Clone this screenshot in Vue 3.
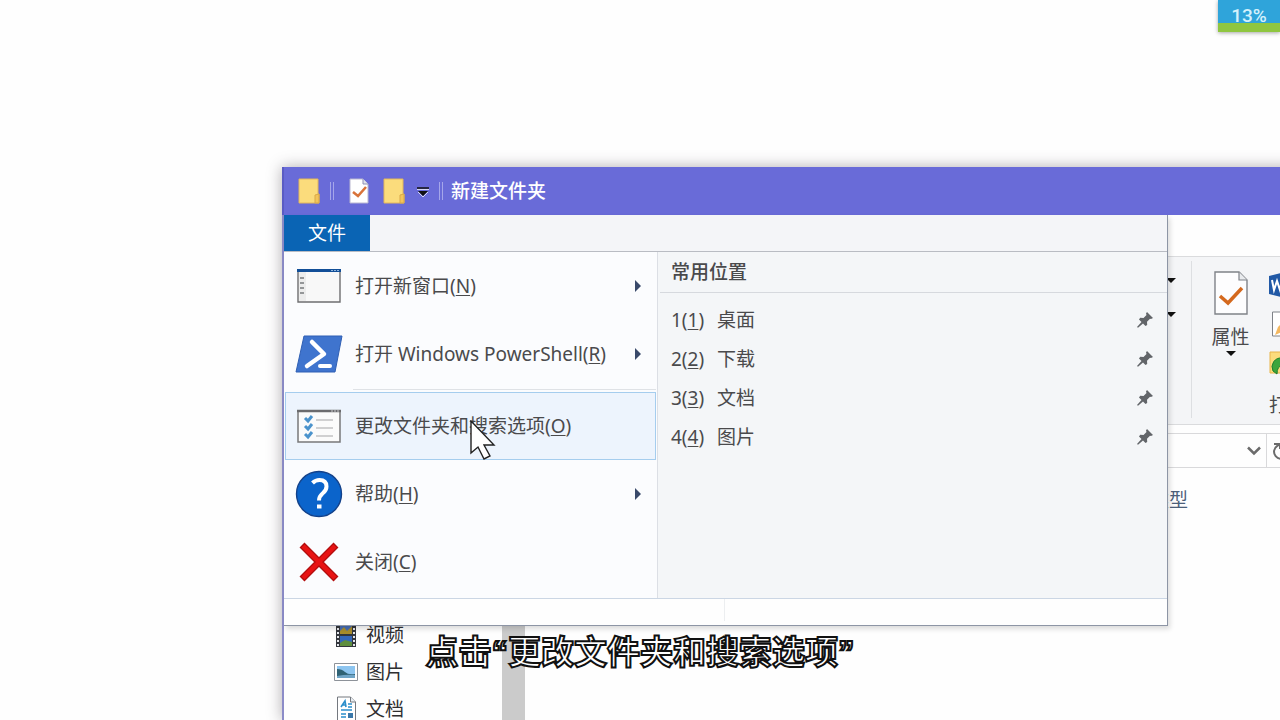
<script setup>
import { ref } from 'vue'

const menuItems = [
  { icon: 'window', label: '打开新窗口', key: 'N', more: true },
  { icon: 'shell', label: '打开 Windows PowerShell', key: 'R', more: true },
  { icon: 'options', label: '更改文件夹和搜索选项', key: 'O', split: true },
  { icon: 'help', label: '帮助', key: 'H', more: true },
  { icon: 'close', label: '关闭', key: 'C' },
]
const places = ['桌面', '下载', '文档', '图片']
const navItems = [
  { icon: 'video', label: '视频' },
  { icon: 'picture', label: '图片' },
  { icon: 'document', label: '文档' },
]

const active = ref('options')
const address = ref('')
const progress = ref(13)
</script>

<template>
  <div class="desktop">
    <div class="explorer">
      <header class="title-bar">
        <svg class="folder" viewBox="0 0 22 26">
          <path d="M1 1h19v15h1v9H1z" fill="#fbdc7c" stroke="#e3b75a" />
          <path d="M17 24v-7l4-1v9h-4z" fill="#f3c45a" stroke="#d9a948" />
        </svg>
        <span class="bar" />
        <svg class="check-doc" viewBox="0 0 20 26">
          <path d="M1 1h13l5 5v19H1z" fill="#fff" stroke="#b9b7d0" />
          <path d="M14 1v5h5" fill="#dfe3ee" stroke="#8f91b5" />
          <path d="M4 14l5 4 8-9" fill="none" stroke="#d9733a" stroke-width="2.600" />
        </svg>
        <svg class="folder second" viewBox="0 0 22 26">
          <path d="M1 1h19v15h1v9H1z" fill="#fbdc7c" stroke="#e3b75a" />
          <path d="M17 24v-7l4-1v9h-4z" fill="#f3c45a" stroke="#d9a948" />
        </svg>
        <svg class="drop" viewBox="0 0 12 12">
          <path d="M0 4.500h12M1 7l5 5 5-5" fill="none" stroke="#d5d6f5" />
          <path d="M0 3h12" stroke="#111" stroke-width="1.500" />
          <path d="M1 6h10l-5 5z" fill="#111" />
        </svg>
        <span class="bar" />
        <h1>新建文件夹</h1>
      </header>

      <div class="tab-strip" />
      <div class="ribbon">
        <div class="group small">
          <i class="caret" />
          <i class="caret" />
        </div>
        <button class="prop">
          <svg width="34" height="44" viewBox="0 0 34 44">
            <path d="M1 1h24l8 8v34H1z" fill="#fdfdfe" stroke="#7f8288" stroke-width="1.400" />
            <path d="M25 1v8h8" fill="#e9ebee" stroke="#7f8288" stroke-width="1.200" />
            <path d="M6 25l8 7 14-15" fill="none" stroke="#d4691e" stroke-width="3.500" />
          </svg>
          <span>属性</span>
          <i class="caret" />
        </button>
        <div class="group open">
          <svg width="26" height="26" viewBox="0 0 26 26">
            <path d="M0 4l16-4v26L0 22z" fill="#2159a6" />
            <path d="M16 3h9v20h-9" fill="#fff" stroke="#2159a6" />
            <path d="M3 8l2 10 3-9 3 9 2-10" fill="none" stroke="#fff" stroke-width="2" />
          </svg>
          <svg width="26" height="26" viewBox="0 0 26 26">
            <path d="M3.500 1h21v24h-21z" fill="#fff" stroke="#7f8288" />
            <path d="M6 24l3-8 14-14 3 4-13 15z" fill="#f4b860" />
          </svg>
          <svg width="26" height="26" viewBox="0 0 26 26">
            <path d="M1 2h24v21H1z" fill="#fbdc7c" stroke="#e8b44a" />
            <path d="M4 21a9 9 0 0 1 9-13V4l10 8-10 9v-5q-5 0-5 8z" fill="#3ca53c" stroke="#1e7f2c" />
          </svg>
          <span>打开</span>
        </div>
      </div>

      <div class="address-row">
        <input v-model="address" type="text" aria-label="地址">
        <svg class="chevron" width="14" height="10" viewBox="0 0 14 10">
          <path d="M1 1.500l6 6 6-6" fill="none" stroke="#6b6b6b" stroke-width="2.500" />
        </svg>
        <button class="refresh" aria-label="刷新">
          <svg width="18" height="20" viewBox="0 0 18 20">
            <path d="M11 4a7 7 0 1 0 5 6M2 3h6v5" fill="none" stroke="#6b6b6b" stroke-width="2" />
          </svg>
        </button>
      </div>

      <div class="body">
        <nav class="tree">
          <a v-for="item in navItems" :key="item.icon" href="#">
            <svg v-if="item.icon === 'video'" width="24" height="24" viewBox="0 0 24 24">
              <path d="M2 0h20v24H2z" fill="#33363c" />
              <path d="M6 1h12v10H6z" fill="#466db5" />
              <path d="M6 13h12v10H6z" fill="#3467bb" />
              <path d="M6 8l4-4 3 4 5-5v8H6z" fill="#a98d2c" />
              <path d="M6 20l5-3 7 2v4H6z" fill="#5e8e3d" />
              <path d="M4 1v23M20 1v23" stroke="#e6e8ec" stroke-width="2" stroke-dasharray="2 2" />
            </svg>
            <svg v-else-if="item.icon === 'picture'" width="24" height="18" viewBox="0 0 24 18">
              <path d="M.5.500h23v17H.500z" fill="#fff" stroke="#8d9299" />
              <path d="M3 3h18v12H3z" fill="#8dc5f0" />
              <path d="M3 6q5 0 8 3t10 2v4H3z" fill="#2f6274" />
              <path d="M3 13q10-2 18-1v3H3z" fill="#6fa4c6" />
            </svg>
            <svg v-else width="24" height="26" viewBox="0 0 24 26">
              <path d="M3.500 1h13l5 5v19h-18z" fill="#fff" stroke="#74787f" />
              <path d="M16.500 1v5h5" fill="#e8edf2" stroke="#74787f" />
              <path d="M7 11l4-6 1 6M8 9h4M14 8h4M14 11h4M7 14h11M7 18h5M7 21h5" fill="none" stroke="#2b8fcb" stroke-width="1.600" />
              <path d="M14 17h5v5h-5z" fill="#3a78aa" />
            </svg>
            {{ item.label }}
          </a>
        </nav>
        <div class="scrollbar" />
        <div class="files">
          <span>类型</span>
        </div>
      </div>

      <section class="file-menu">
        <div class="menu-tabs">
          <button class="file-tab">文件</button>
        </div>
        <div class="menu-body">
          <div class="commands">
            <template v-for="item in menuItems" :key="item.key">
              <div v-if="item.split" class="split" />
              <button
                class="command"
                :class="{ active: active === item.icon }"
                @mouseenter="active = item.icon"
              >
                <svg v-if="item.icon === 'window'" viewBox="0 0 48 48">
                  <path d="M3 8h42v32H3z" fill="#f8f8f8" stroke="#6e6e70" stroke-width="1.400" />
                  <path d="M4 9h7v30H4z" fill="#ececec" />
                  <path d="M2 8.500h44" stroke="#124f98" stroke-width="3" />
                  <path d="M36 8.500h8" stroke="#8fb4dc" stroke-dasharray="2 1" />
                  <path d="M5 16h4M5 21h4M5 26h4M5 31h4" stroke="#77797c" stroke-width="1.600" />
                </svg>
                <svg v-else-if="item.icon === 'shell'" viewBox="0 0 48 48">
                  <path d="M9 6h38l-7 36H1z" fill="#3f74ce" stroke="#2f5fb4" />
                  <path d="M17 12l12 12L12 36" fill="none" stroke="#fff" stroke-width="4.500" stroke-linecap="round" stroke-linejoin="round" />
                  <path d="M25 36h10" stroke="#fff" stroke-width="4" stroke-linecap="round" />
                </svg>
                <svg v-else-if="item.icon === 'options'" viewBox="0 0 48 48">
                  <path d="M3 9h42v31H3z" fill="#fbfbfb" stroke="#78787a" stroke-width="1.500" />
                  <path d="M2 9h44" stroke="#6b6b6e" stroke-width="2.500" />
                  <path d="M36 9h8" stroke="#c8c8ca" stroke-dasharray="2 1" />
                  <path d="M10 16l3 3 4-5M10 24l3 3 4-5M10 32l3 3 4-5" fill="none" stroke="#4b93cc" stroke-width="3" />
                  <path d="M21 18h17M21 26h17M21 34h17" stroke="#c2c2c4" stroke-width="1.600" />
                </svg>
                <svg v-else-if="item.icon === 'help'" viewBox="0 0 48 48">
                  <circle cx="24" cy="24" r="22.500" fill="#0b64cb" stroke="#12418a" stroke-width="1.400" />
                  <path d="M17.500 13q3-3 7-3 7 0 7 6.500 0 4-4 7-3.500 3-3.500 7" fill="none" stroke="#fff" stroke-width="4" />
                  <path d="M22 34.500h4.500v4H22z" fill="#fff" />
                </svg>
                <svg v-else viewBox="0 0 48 48">
                  <path d="M7 7l34 34M41 7L7 41" stroke="#b30d0d" stroke-width="7" />
                  <path d="M8 8l32 32M40 8L8 40" stroke="#e81313" stroke-width="4.500" />
                </svg>
                <span class="label">{{ item.label }}(<u>{{ item.key }}</u>)</span>
                <i v-if="item.more" class="arrow" />
              </button>
            </template>
          </div>
          <div class="places">
            <h2>常用位置</h2>
            <ul>
              <li v-for="(place, idx) in places" :key="place">
                <span class="num">{{ idx + 1 }}(<u>{{ idx + 1 }}</u>)</span>
                <span class="place">{{ place }}</span>
                <svg width="16" height="16" viewBox="0 0 16 16">
                  <path d="M10 0l6 6-2 1-1-.3-3 3 .2 3.300-1.700 1L6 11.500l-5 4.200L0 15l4.500-5L2 7.500l1.200-1.700 3.300.2 3-3L9 1.500z" fill="#626569" />
                </svg>
              </li>
            </ul>
          </div>
        </div>
        <footer>
          <span />
        </footer>
      </section>
    </div>

    <svg class="cursor" width="26" height="42" viewBox="0 0 26 42">
      <path d="M1 1v32l7-6 6 12 6-3-6-11h10z" fill="#fff" stroke="#222" stroke-width="1.400" />
    </svg>
    <p class="caption">点击“更改文件夹和搜索选项”</p>
    <div class="progress">{{ progress }}%</div>
  </div>
</template>

<style>
body {
  margin: 0;
}
</style>

<style scoped>
.desktop {
  position: relative;
  height: 100vh;
  overflow: hidden;
  background: #fefefe;
  font-family: 'Noto Sans', 'Noto Sans CJK SC', sans-serif;
  font-size: 19px;
  line-height: 28px;
  color: #4a4a4c;
}
button {
  font: inherit;
  color: inherit;
  border: 0;
  padding: 0;
  background: none;
}
svg {
  flex: none;
}
.explorer {
  position: absolute;
  top: 167px;
  left: 282px;
  right: -40px;
  bottom: 0;
  box-sizing: border-box;
  display: flex;
  flex-direction: column;
  border-left: 2px solid #8c8cc8;
  background: #fefefe;
  box-shadow: 0 0 14px rgba(60, 50, 60, 0.4);
}
.title-bar {
  display: flex;
  align-items: center;
  height: 48px;
  padding-left: 14px;
  margin-left: -2px;
  background: #696bd8;
  border-left: 2px solid #5a5bc4;
  box-sizing: border-box;
  flex: none;
}
.title-bar h1 {
  margin: 0 0 0 8px;
  font-size: 19px;
  font-weight: 500;
  color: #fff;
}
.folder {
  width: 22px;
  height: 26px;
}
.folder.second {
  margin-left: 14px;
}
.check-doc {
  width: 20px;
  height: 26px;
  margin-left: 15px;
}
.bar {
  width: 2px;
  height: 18px;
  margin-left: 10px;
  border: solid #a5a6ea;
  border-width: 0 1px;
}
.drop {
  width: 12px;
  height: 12px;
  margin-left: 12px;
}
.tab-strip {
  flex: none;
  height: 41px;
}
.ribbon {
  flex: none;
  display: flex;
  justify-content: flex-end;
  height: 167px;
  border: solid #dadbdd;
  border-width: 1px 0;
  background: #f4f5f7;
}
.group.small {
  display: flex;
  flex-direction: column;
  gap: 29px;
  width: 26px;
  padding-top: 17px;
  margin: 4px 0 6px;
  box-sizing: border-box;
  border-right: 1px solid #dddfe2;
}
.caret {
  border: 5px solid transparent;
  border-top-color: #111;
  border-bottom: 0;
}
.group.small .caret {
  width: 0;
}
.prop {
  display: flex;
  flex-direction: column;
  align-items: center;
  width: 77px;
  padding-top: 14px;
}
.prop span {
  margin-top: 8px;
}
.group.open {
  display: flex;
  flex-direction: column;
  gap: 13px;
  width: 51px;
  padding-top: 15px;
}
.group.open span {
  margin-top: 2px;
}
.address-row {
  flex: none;
  display: flex;
  align-items: center;
  height: 33px;
  margin-top: 8px;
  border: solid #d9d9db;
  border-width: 1px 0;
}
.address-row input {
  flex: 1;
  min-width: 0;
  border: 0;
  padding: 0;
  background: none;
  font: inherit;
}
.chevron {
  margin-right: 5px;
}
.refresh {
  width: 54px;
  height: 33px;
  padding-left: 5px;
  border-left: 1px solid #d9d9db;
  text-align: left;
}
.refresh svg {
  display: block;
}
.body {
  flex: 1;
  min-height: 0;
  display: flex;
}
.tree {
  flex: 0 0 218px;
  padding-top: 148px;
  box-sizing: border-box;
}
.tree a {
  display: flex;
  align-items: center;
  gap: 8px;
  height: 37px;
  padding-left: 50px;
  color: #2f2f31;
  text-decoration: none;
}
.scrollbar {
  width: 23px;
  background: #cbcbcb;
}
.files {
  flex: 1;
  padding: 18px 132px 0 0;
  text-align: right;
  color: #4c607a;
}
.file-menu {
  position: absolute;
  top: 48px;
  left: 0;
  right: 152px;
  box-sizing: border-box;
  border: solid #8d95a5;
  border-width: 0 1px 1px 0;
  background: #fefefe;
  box-shadow: 2px 3px 5px rgba(0, 0, 0, 0.14);
}
.menu-tabs {
  height: 36px;
  border-bottom: 1px solid #b9bcc3;
  background: #f4f5f8;
}
.file-tab {
  width: 86px;
  height: 36px;
  background: #0a64b4;
  color: #fff;
}
.menu-body {
  display: flex;
}
.commands {
  flex: 0 0 374px;
  box-sizing: border-box;
  padding: 0 1px 2px;
  border-right: 1px solid #dcdfe5;
  background: #fbfcfe;
}
.split {
  height: 1px;
  margin: 1px 0 2px 68px;
  background: #dfe2e6;
}
.command {
  display: flex;
  align-items: center;
  width: 100%;
  height: 68px;
  padding: 0 14px 0 9px;
  border: 1px solid transparent;
}
.command.active {
  border-color: #a5cdee;
  background: #edf4fd;
}
.command svg {
  width: 48px;
  height: 48px;
}
.label {
  flex: 1;
  margin-left: 12px;
  text-align: left;
}
u {
  text-underline-offset: 2px;
  text-decoration-thickness: 1px;
}
.arrow {
  border: 6px solid transparent;
  border-left-color: #39496a;
  border-right: 0;
}
.places {
  flex: 1;
  background: #f4f6f8;
}
.places h2 {
  margin: 0 0 0 2px;
  padding-left: 11px;
  height: 40px;
  line-height: 40px;
  border-bottom: 1px solid #d6d9de;
  font-size: 19px;
  font-weight: 500;
}
.places ul {
  list-style: none;
  margin: 0;
  padding: 7px 14px 0 13px;
}
.places li {
  display: flex;
  align-items: center;
  height: 39px;
}
.num {
  width: 46px;
}
.place {
  flex: 1;
}
footer {
  height: 26px;
  border-top: 1px solid #cbd6e4;
}
footer span {
  display: block;
  width: 440px;
  height: 22px;
  border-right: 1px solid #eceef0;
}
.cursor {
  position: absolute;
  top: 420px;
  left: 470px;
}
.caption {
  position: absolute;
  left: 0;
  right: 0;
  bottom: 44px;
  margin: 0;
  font-family: 'Liberation Sans', 'Noto Sans CJK SC', sans-serif;
  font-size: 33px;
  line-height: 46px;
  font-weight: 700;
  text-align: center;
  color: #fff;
  -webkit-text-stroke: 2px #111;
}
.progress {
  position: absolute;
  top: 0;
  right: 0;
  width: 62px;
  height: 32px;
  box-sizing: border-box;
  border-bottom: 9px solid #8fc640;
  background: #2fa4da;
  box-shadow: 0 1px 4px rgba(0, 0, 0, 0.35);
  font-family: Roboto, sans-serif;
  font-weight: 500;
  line-height: 32px;
  text-align: center;
  color: #d4f1fc;
}
</style>
